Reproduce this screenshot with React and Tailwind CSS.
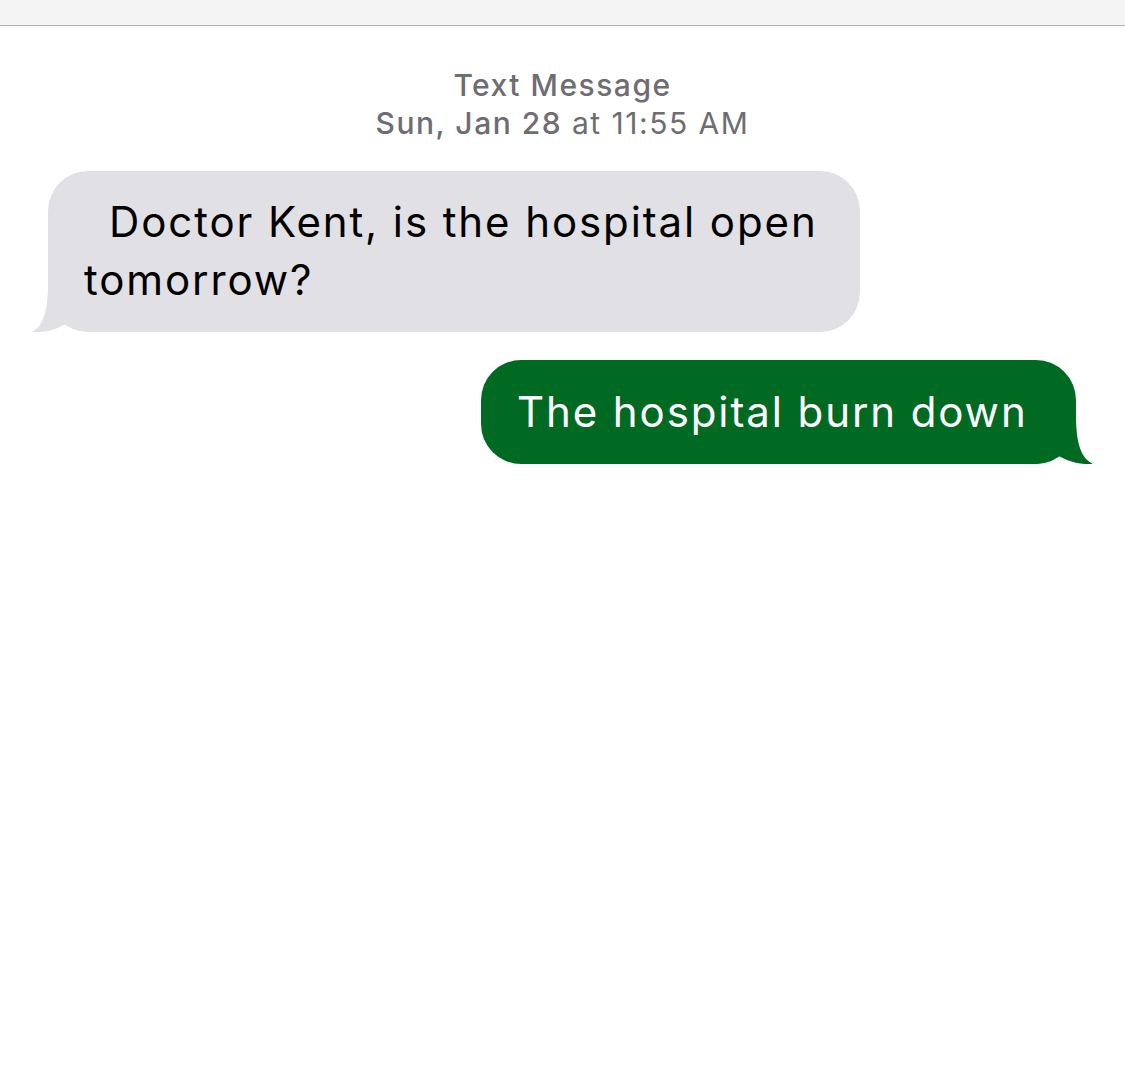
import React from 'react';

const font = { fontFamily: 'Inter, "Noto Sans", sans-serif' };

const LeftTail = () => (
  <svg
    className="absolute left-[-16px] bottom-0"
    width="62"
    height="50"
    viewBox="0 0 62 50"
  >
    <path
      d="M16 0 C16 30 11 44 0 50 C14 51 26 47 35 41 C44 48 52 50 62 50 L62 0 Z"
      fill="#e1e1e5"
    />
  </svg>
);

const RightTail = () => (
  <svg
    className="absolute right-[-17px] bottom-0"
    width="60"
    height="50"
    viewBox="0 0 60 50"
  >
    <path
      d="M43 0 C43 30 48 44 60 50 C46 51 34 47 24 41 C16 48 8 50 0 50 L0 0 Z"
      fill="#006a23"
    />
  </svg>
);

export default function App() {
  return (
    <div className="min-h-screen bg-white" style={font}>
      {/* top bar */}
      <div className="h-[26px] bg-[#f4f4f4] border-b border-[#b3b3b3]" />

      {/* header */}
      <div className="mt-[40px] flex flex-col items-center text-[30px] leading-[38px] tracking-[1.5px] text-[#6d6d72]">
        <div className="font-medium">Text Message</div>
        <div>
          <span className="font-medium">Sun, Jan 28</span> at 11:55 AM
        </div>
      </div>

      {/* messages */}
      <div className="mt-[29px] flex flex-col gap-[28px] text-[42px] leading-[58px] tracking-[1.9px]">
        <div className="flex justify-start pl-[48px]">
          <div className="relative w-[812px] rounded-[40px] bg-[#e1e1e5] pl-[36px] pt-[22px] pb-[23px] text-black">
            <LeftTail />
            <div className="relative">
              <div className="pl-[25px]">Doctor Kent, is the hospital open</div>
              <div>tomorrow?</div>
            </div>
          </div>
        </div>

        <div className="flex justify-end pr-[49px]">
          <div className="relative w-[595px] rounded-[40px] bg-[#006a23] pl-[36px] pt-[23px] pb-[23px] text-white">
            <RightTail />
            <div className="relative">The hospital burn down</div>
          </div>
        </div>
      </div>
    </div>
  );
}
